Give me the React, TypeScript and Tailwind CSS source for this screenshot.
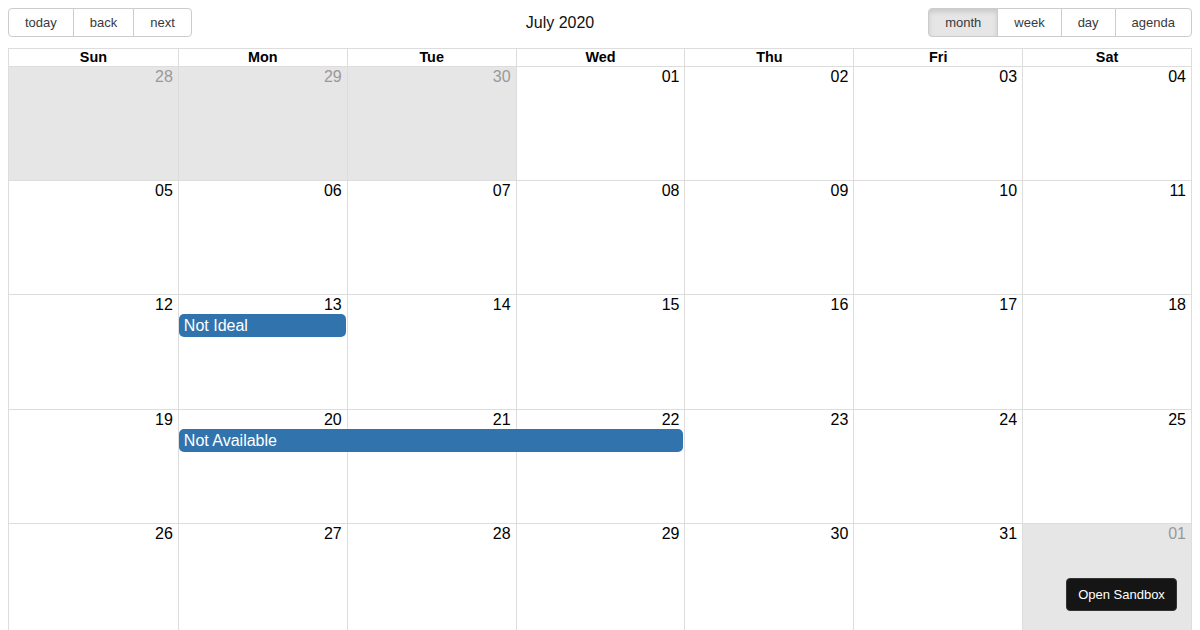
import React from "react"

type Day = { n: string; off?: boolean }

const weeks: Day[][] = [
    [{ n: "28", off: true }, { n: "29", off: true }, { n: "30", off: true }, { n: "01" }, { n: "02" }, { n: "03" }, { n: "04" }],
    [{ n: "05" }, { n: "06" }, { n: "07" }, { n: "08" }, { n: "09" }, { n: "10" }, { n: "11" }],
    [{ n: "12" }, { n: "13" }, { n: "14" }, { n: "15" }, { n: "16" }, { n: "17" }, { n: "18" }],
    [{ n: "19" }, { n: "20" }, { n: "21" }, { n: "22" }, { n: "23" }, { n: "24" }, { n: "25" }],
    [{ n: "26" }, { n: "27" }, { n: "28" }, { n: "29" }, { n: "30" }, { n: "31" }, { n: "01", off: true }],
]

// events per week index: start column, span
const events: Record<number, { title: string; start: number; span: number }[]> = {
    2: [{ title: "Not Ideal", start: 1, span: 1 }],
    3: [{ title: "Not Available", start: 1, span: 3 }],
}

const weekdays = ["Sun", "Mon", "Tue", "Wed", "Thu", "Fri", "Sat"]

const colStart = ["col-start-1", "col-start-2", "col-start-3", "col-start-4", "col-start-5", "col-start-6", "col-start-7"]
const colSpan = ["col-span-1", "col-span-1", "col-span-2", "col-span-3", "col-span-4", "col-span-5", "col-span-6", "col-span-7"]

function ToolbarButton({ label, first, last, active }: { label: string; first?: boolean; last?: boolean; active?: boolean }) {
    return (
        <button
            className={
                "border border-[#ccc] px-4 py-[6px] text-[13px] leading-[15px] text-[#373a3c] " +
                (first ? "rounded-l-[4px] " : "-ml-px ") +
                (last ? "rounded-r-[4px] " : "") +
                (active ? "bg-[#e6e6e6] border-[#adadad] shadow-[inset_0_3px_5px_rgba(0,0,0,0.125)]" : "bg-white")
            }
        >
            {label}
        </button>
    )
}

export default function App() {
    return (
        <div className="relative h-[630px] overflow-hidden bg-white p-2 font-['Liberation_Sans',Arial,sans-serif] text-[#373a3c]">
            <div className="mb-[11px] flex items-center">
                <div className="flex">
                    <ToolbarButton label="today" first />
                    <ToolbarButton label="back" />
                    <ToolbarButton label="next" last />
                </div>
                <div className="flex-1 text-center text-base text-[#111]">July 2020</div>
                <div className="flex">
                    <ToolbarButton label="month" first active />
                    <ToolbarButton label="week" />
                    <ToolbarButton label="day" />
                    <ToolbarButton label="agenda" last />
                </div>
            </div>

            <div className="flex h-[590px] flex-col border border-[#ddd]">
                <div className="grid h-[18px] grid-cols-7">
                    {weekdays.map((d, i) => (
                        <div
                            key={d}
                            className={"border-b border-[#ddd] text-center text-[14.4px] font-bold leading-[17px] text-black " + (i > 0 ? "border-l" : "")}
                        >
                            {d}
                        </div>
                    ))}
                </div>

                {weeks.map((week, wi) => (
                    <div key={wi} className={"relative flex-1 " + (wi > 0 ? "border-t border-[#ddd]" : "")}>
                        <div className="grid h-full grid-cols-7">
                            {week.map((day, di) => (
                                <div
                                    key={di}
                                    className={
                                        (di > 0 ? "border-l border-[#ddd] " : "") +
                                        (day.off ? "bg-[#e6e6e6] text-[#999]" : "bg-white text-black")
                                    }
                                >
                                    <div className="pr-[5px] text-right text-base leading-[19px]">{day.n}</div>
                                </div>
                            ))}
                        </div>
                        {events[wi] && (
                            <div className="absolute inset-x-0 top-[19px] grid grid-cols-7">
                                {events[wi].map((ev) => (
                                    <div
                                        key={ev.title}
                                        className={colStart[ev.start] + " " + colSpan[ev.span] + " pl-[1px] pr-[1px]"}
                                    >
                                        <div className="rounded-[5px] bg-[#3174ad] px-[5px] py-[2px] text-base leading-[19px] text-white">
                                            {ev.title}
                                        </div>
                                    </div>
                                ))}
                            </div>
                        )}
                    </div>
                ))}
            </div>

            <button className="absolute bottom-[19px] right-[23px] h-[33px] w-[111px] rounded-[4px] border border-[#333] bg-[#151515] text-[13px] text-white">
                Open Sandbox
            </button>
        </div>
    )
}
